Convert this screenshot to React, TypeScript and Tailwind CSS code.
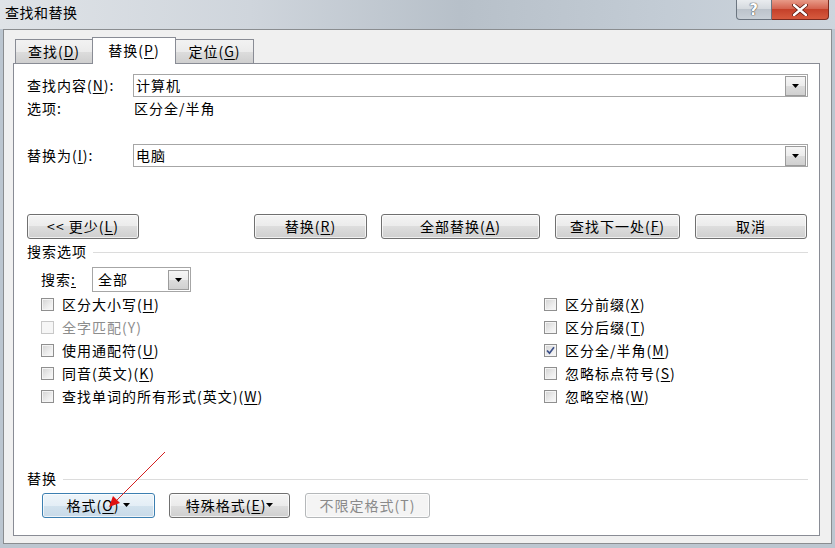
import { FC, ReactNode } from 'react'

const FONT = "font-['Noto_Sans_CJK_SC','Microsoft_YaHei',sans-serif]"

const U: FC<{ c: string }> = ({ c }) => (
  <span className="underline decoration-1 underline-offset-[2px]">{c}</span>
)

const Key: FC<{ label: string; k: string }> = ({ label, k }) => (
  <>
    {label}(<U c={k} />)
  </>
)

const Arrow: FC = () => (
  <svg
    width="7"
    height="4"
    viewBox="0 0 7 4"
  >
    <path
      d="M0 0h7L3.5 4z"
      fill="#000"
    />
  </svg>
)

const DropBtn: FC = () => (
  <div className="flex h-[20px] w-[21px] items-center justify-center border border-[#9c9c9c] bg-[linear-gradient(to_bottom,#f6f6f6_0%,#ececec_50%,#dcdcdc_50%,#d0d0d0_100%)]">
    <Arrow />
  </div>
)

const Combo: FC<{ value: string }> = ({ value }) => (
  <div className="flex h-[23px] flex-1 items-center border border-[#a6a6a6] bg-white pl-[2px] pr-px">
    <span className="-mt-px flex-1">{value}</span>
    <DropBtn />
  </div>
)

type BtnProps = {
  w: string
  children: ReactNode
  variant?: 'normal' | 'focus' | 'disabled'
  className?: string
}

const Btn: FC<BtnProps> = ({ w, children, variant = 'normal', className = '' }) => {
  const look =
    variant === 'focus'
      ? 'border-[#3c7fb1] bg-[linear-gradient(to_bottom,#eef5fa_0%,#e4eef6_50%,#d2e2ee_50%,#c8dae8_100%)]'
      : variant === 'disabled'
        ? 'border-[#b5b8ba] bg-[#f4f4f4] text-[#8a8a8a]'
        : 'border-[#707070] bg-[linear-gradient(to_bottom,#f4f4f4_0%,#ebebeb_50%,#dddddd_50%,#cfcfcf_100%)]'

  return (
    <div
      className={`flex h-[25px] items-center justify-center rounded-[3px] border pb-px shadow-[inset_0_0_0_1px_rgba(255,255,255,0.7)] ${look} ${w} ${className}`}
    >
      {children}
    </div>
  )
}

const Check: FC<{ checked?: boolean; disabled?: boolean }> = ({ checked, disabled }) => (
  <div
    className={`flex h-[13px] w-[13px] shrink-0 items-center justify-center border ${
      disabled
        ? 'border-[#c8c8c8] bg-[#f6f6f6]'
        : 'border-[#8f8f8f] bg-[linear-gradient(135deg,#d2d2d2_0%,#ededed_60%,#fafafa_100%)] shadow-[inset_0_0_0_1px_#f4f4f4]'
    }`}
  >
    {checked && (
      <svg
        width="9"
        height="9"
        viewBox="0 0 9 9"
      >
        <path
          d="M1 4.5L3.5 7.2L8 1.2"
          stroke="#3b4f88"
          strokeWidth="1.7"
          fill="none"
        />
      </svg>
    )}
  </div>
)

const Option: FC<{ children: ReactNode; checked?: boolean; disabled?: boolean }> = ({
  children,
  checked,
  disabled,
}) => (
  <div className="flex h-[23px] items-center gap-[8px]">
    <Check
      checked={checked}
      disabled={disabled}
    />
    <span className={`-mt-[2px] ${disabled ? 'text-[#8d8d8d]' : ''}`}>{children}</span>
  </div>
)

const Tab: FC<{ children: ReactNode; active?: boolean; w: string }> = ({ children, active, w }) =>
  active ? (
    <div
      className={`relative z-10 -mx-px -mb-px flex h-[27px] items-center justify-center border border-b-0 border-[#898c95] bg-white pb-[2px] ${w}`}
    >
      {children}
    </div>
  ) : (
    <div
      className={`flex h-[24px] items-center justify-center border border-b-0 border-[#898c95] bg-[linear-gradient(to_bottom,#f2f2f2_0%,#ebebeb_50%,#dddddd_50%,#cfcfcf_100%)] pb-px ${w}`}
    >
      {children}
    </div>
  )

const Heading: FC<{ text: string }> = ({ text }) => (
  <div className="flex h-[16px] items-center">
    <span className="-mt-[2px]">{text}</span>
    <div className="ml-[6px] h-px flex-1 bg-[#dcdcdc]" />
  </div>
)

const App: FC = () => {
  return (
    <div
      className={`relative h-[548px] w-[835px] overflow-hidden bg-[#bcc6d0] text-[14px] leading-[16px] tracking-[1px] text-black ${FONT}`}
    >
      {/* title bar */}
      <div className="flex h-[29px] items-start bg-[linear-gradient(to_right,#dfe3e7_0%,#cfd5dc_30%,#b7c0c9_55%,#c3ccd5_80%,#cdd5dd_100%)]">
        <span className="ml-[5px] mt-[4px] text-[14px] tracking-[0.5px]">查找和替换</span>
        <div className="ml-auto mr-[6px] flex h-[20px]">
          <div className="flex w-[36px] items-center justify-center rounded-bl-[4px] border border-t-0 border-[#6b7580] bg-[linear-gradient(to_bottom,#e9ecef_0%,#d3d8dd_50%,#bcc3cb_50%,#c9d0d7_100%)] font-['DejaVu_Sans',sans-serif] text-[15px] font-bold leading-[18px] text-white [text-shadow:0_0_1px_#333,0_0_1px_#333]">
            ?
          </div>
          <div className="flex w-[57px] items-center justify-center rounded-br-[4px] border border-l-0 border-t-0 border-[#7b2a1e] bg-[linear-gradient(to_bottom,#e89a88_0%,#d56450_45%,#c5412a_50%,#d65a3e_100%)]">
            <svg
              width="16"
              height="12"
              viewBox="0 0 16 12"
            >
              <path
                d="M2 1L14 11M14 1L2 11"
                stroke="#5a1a10"
                strokeWidth="4"
                strokeLinecap="round"
              />
              <path
                d="M2 1L14 11M14 1L2 11"
                stroke="#fff"
                strokeWidth="2.4"
                strokeLinecap="round"
              />
            </svg>
          </div>
        </div>
      </div>

      {/* window body */}
      <div className="ml-[3px] mr-[3px] flex h-[515px] flex-col border border-[#8a8d90] bg-[#f0f0f0] pl-[9px] pr-[11px] pt-[7px]">
        <div className="flex items-end pl-[2px]">
          <Tab w="w-[78px]">
            <Key
              label="查找"
              k="D"
            />
          </Tab>
          <Tab
            active
            w="w-[84px]"
          >
            <Key
              label="替换"
              k="P"
            />
          </Tab>
          <Tab w="w-[79px]">
            <Key
              label="定位"
              k="G"
            />
          </Tab>
        </div>

        <div className="flex h-[473px] flex-col border border-[#898c95] bg-white pl-[13px] pr-[11px]">
          <div className="mt-[10px] flex items-center">
            <span className="-mt-px w-[106px]">
              <Key
                label="查找内容"
                k="N"
              />
              :
            </span>
            <Combo value="计算机" />
          </div>
          <div className="mt-[3px] flex h-[16px] items-center">
            <span className="w-[106px]">选项:</span>
            <span className="pl-[1px]">区分全/半角</span>
          </div>
          <div className="mt-[28px] flex items-center">
            <span className="-mt-px w-[106px]">
              <Key
                label="替换为"
                k="I"
              />
              :
            </span>
            <Combo value="电脑" />
          </div>

          <div className="mt-[47px] flex">
            <Btn w="w-[112px]">
              &lt;&lt; 更少(<U c="L" />)
            </Btn>
            <Btn
              w="w-[113px]"
              className="ml-[115px]"
            >
              <Key
                label="替换"
                k="R"
              />
            </Btn>
            <Btn
              w="w-[159px]"
              className="ml-[14px]"
            >
              <Key
                label="全部替换"
                k="A"
              />
            </Btn>
            <Btn
              w="w-[125px]"
              className="ml-[15px]"
            >
              <Key
                label="查找下一处"
                k="F"
              />
            </Btn>
            <Btn
              w="w-[112px]"
              className="ml-[15px]"
            >
              取消
            </Btn>
          </div>

          <div className="mt-[5px]">
            <Heading text="搜索选项" />
          </div>

          <div className="ml-[14px] mt-[7px] flex items-center">
            <span className="-mt-[2px] w-[51px]">
              搜索<U c=":" />
            </span>
            <div className="flex h-[25px] w-[99px] items-center border border-[#a6a6a6] bg-white pl-[5px] pr-px">
              <span className="-mt-px flex-1">全部</span>
              <DropBtn />
            </div>
          </div>

          <div className="mt-[1px] flex">
            <div className="ml-[14px] flex w-[503px] flex-col">
              <Option>
                <Key
                  label="区分大小写"
                  k="H"
                />
              </Option>
              <Option disabled>全字匹配(Y)</Option>
              <Option>
                <Key
                  label="使用通配符"
                  k="U"
                />
              </Option>
              <Option>
                <Key
                  label="同音(英文)"
                  k="K"
                />
              </Option>
              <Option>
                <Key
                  label="查找单词的所有形式(英文)"
                  k="W"
                />
              </Option>
            </div>
            <div className="flex flex-col">
              <Option>
                <Key
                  label="区分前缀"
                  k="X"
                />
              </Option>
              <Option>
                <Key
                  label="区分后缀"
                  k="T"
                />
              </Option>
              <Option checked>
                <Key
                  label="区分全/半角"
                  k="M"
                />
              </Option>
              <Option>
                <Key
                  label="忽略标点符号"
                  k="S"
                />
              </Option>
              <Option>
                <Key
                  label="忽略空格"
                  k="W"
                />
              </Option>
            </div>
          </div>

          <div className="mt-[63px]">
            <Heading text="替换" />
          </div>

          <div className="mt-[6px] flex pl-[15px]">
            <Btn
              w="w-[113px]"
              variant="focus"
            >
              格式(<U c="O" />)
              <span className="ml-[4px] flex">
                <Arrow />
              </span>
            </Btn>
            <Btn
              w="w-[121px]"
              className="ml-[14px]"
            >
              特殊格式(<U c="E" />)
              <span className="flex">
                <Arrow />
              </span>
            </Btn>
            <Btn
              w="w-[125px]"
              variant="disabled"
              className="ml-[15px]"
            >
              不限定格式(T)
            </Btn>
          </div>
        </div>
      </div>

      {/* annotation arrow */}
      <svg
        className="pointer-events-none absolute left-0 top-0"
        width="835"
        height="548"
      >
        <line
          x1="165"
          y1="452"
          x2="116"
          y2="501"
          stroke="#d42020"
          strokeWidth="1"
        />
        <path
          d="M109 507L113 496L120 503Z"
          fill="#e01010"
        />
      </svg>
    </div>
  )
}

export default App
